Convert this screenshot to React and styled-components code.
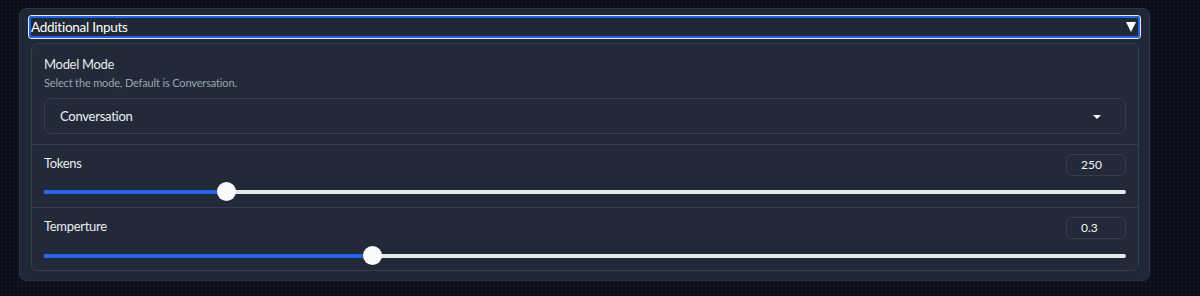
import React from 'react';
import styled, { createGlobalStyle } from 'styled-components';

const Global = createGlobalStyle`
  html, body {
    margin: 0;
    padding: 0;
    background-color: #0b0f19;
    background-image: radial-gradient(rgba(255,255,255,0.035) 1px, transparent 1px);
    background-size: 4px 4px;
    font-family: Lato, "Noto Sans", sans-serif;
    color: #f3f4f6;
  }
  #root {
    height: 296px;
    padding-top: 8px;
    box-sizing: border-box;
  }
`;

const Panel = styled.div`
  margin-left: 19px;
  width: 1131px;
  height: 273px;
  box-sizing: border-box;
  background: #1f2836;
  border: 1px solid #2c3544;
  border-radius: 7px;
  padding: 7px 9px 9px 9px;
  display: flex;
  flex-direction: column;
  gap: 5px;
`;

const Summary = styled.div`
  height: 22px;
  box-sizing: border-box;
  border: 2px solid #1f63e6;
  box-shadow: 0 0 0 1px #e8eaee;
  border-radius: 3px;
  display: flex;
  align-items: center;
  justify-content: space-between;
  padding: 0 1px 0 0;
  font-size: 13.5px;
  letter-spacing: -0.25px;
  color: #ffffff;
`;

const Marker = styled.span`
  width: 0;
  height: 0;
  border-left: 5px solid transparent;
  border-right: 5px solid transparent;
  border-top: 10px solid #ffffff;
  margin-right: 1px;
`;

const Group = styled.div`
  margin: 0 1px 0 2px;
  flex: 1;
  border: 1px solid #343d4c;
  border-radius: 6px;
  background: #222a39;
  display: flex;
  flex-direction: column;
  overflow: hidden;
`;

const Block = styled.div`
  padding: ${p => p.$pad || '0 12px'};
  height: ${p => p.$h}px;
  box-sizing: border-box;
  border-top: ${p => (p.$first ? 'none' : '1px solid #343d4c')};
  display: flex;
  flex-direction: column;
`;

const Label = styled.div`
  font-size: 13px;
  letter-spacing: -0.3px;
  color: #e8eaee;
  line-height: 16px;
  margin-top: ${p => p.$mt || 0}px;
`;

const Info = styled.div`
  font-size: 11px;
  letter-spacing: -0.15px;
  color: #9ca3af;
  line-height: 14px;
  margin-top: 4px;
`;

const Select = styled.div`
  margin-top: 8px;
  height: 36px;
  box-sizing: border-box;
  border: 1px solid #343d4c;
  border-radius: 7px;
  display: flex;
  align-items: center;
  justify-content: space-between;
  padding: 0 24px 0 15px;
  font-size: 13px;
  letter-spacing: -0.25px;
  color: #eef0f3;
`;

const Caret = styled.span`
  width: 0;
  height: 0;
  border-left: 4px solid transparent;
  border-right: 4px solid transparent;
  border-top: 4px solid #ffffff;
  margin-top: 2px;
`;

const HeadRow = styled.div`
  display: flex;
  align-items: flex-start;
  justify-content: space-between;
`;

const NumberBox = styled.div`
  width: 60px;
  height: 22px;
  box-sizing: border-box;
  border: 1px solid #343d4c;
  border-radius: 6px;
  padding-left: 14px;
  display: flex;
  align-items: center;
  font-size: 12px;
  color: #f3f4f6;
`;

const Track = styled.div`
  position: relative;
  height: 4px;
  border-radius: 2px;
  background: #e5e7eb;
  margin-top: ${p => p.$mt}px;
`;

const Fill = styled.div`
  height: 100%;
  border-radius: 2px;
  background: #2563eb;
`;

const Thumb = styled.div`
  position: absolute;
  top: 50%;
  width: 19px;
  height: 19px;
  margin: -9.5px 0 0 -9.5px;
  border-radius: 50%;
  background: #f9fafb;
`;

function Slider({ pos, mt }) {
  return (
    <Track $mt={mt}>
      <Fill style={{ width: pos + 'px' }} />
      <Thumb style={{ left: pos + 'px' }} />
    </Track>
  );
}

function SliderBlock({ label, value, pos, mt }) {
  return (
    <Block $h={64} $pad="9px 12px 0 12px">
      <HeadRow>
        <Label $mt={1}>{label}</Label>
        <NumberBox>{value}</NumberBox>
      </HeadRow>
      <Slider pos={pos} mt={mt} />
    </Block>
  );
}

export default function App() {
  return (
    <>
      <Global />
      <Panel>
        <Summary>
          <span>Additional Inputs</span>
          <Marker />
        </Summary>
        <Group>
          <Block $first $h={101} $pad="12px 12px 0 12px">
            <Label>Model Mode</Label>
            <Info>Select the mode, Default is Conversation.</Info>
            <Select>
              <span>Conversation</span>
              <Caret />
            </Select>
          </Block>
          <SliderBlock label="Tokens" value="250" pos={182} mt={14} />
          <SliderBlock label="Temperture" value="0.3" pos={328} mt={15} />
        </Group>
      </Panel>
    </>
  );
}
